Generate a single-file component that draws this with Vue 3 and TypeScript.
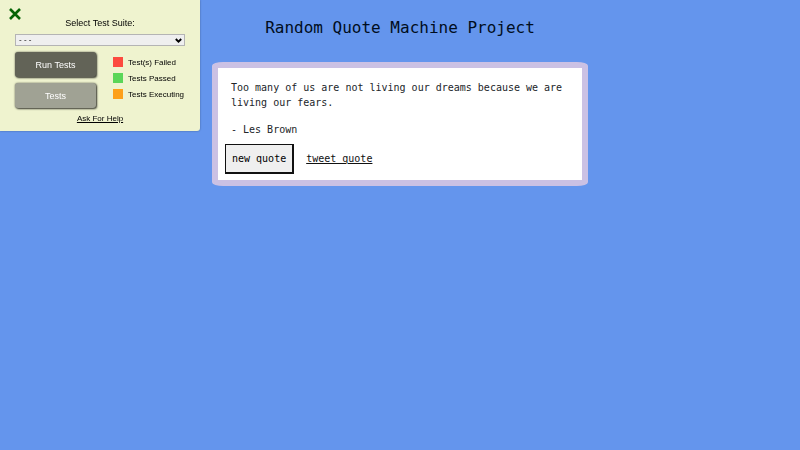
<script setup lang="ts">
import { computed, ref } from 'vue'

interface Quote {
  text: string
  author: string
}

const quotes: Quote[] = [
  {
    text: 'Too many of us are not living our dreams because we are living our fears.',
    author: 'Les Brown',
  },
]

const legend = [
  { label: 'Test(s) Failed', tone: 'failed' },
  { label: 'Tests Passed', tone: 'passed' },
  { label: 'Tests Executing', tone: 'executing' },
]

const index = ref(0)
const suite = ref('')
const panelOpen = ref(true)
const quote = computed(() => quotes[index.value])

function nextQuote(): void {
  index.value = (index.value + 1) % quotes.length
}
</script>

<template>
  <aside v-if="panelOpen" class="panel">
    <button class="close" type="button" aria-label="Close" @click="panelOpen = false">
      <svg width="12" height="12" viewBox="0 0 12 12" aria-hidden="true">
        <path d="M1 1L11 11M11 1L1 11" fill="none" stroke="#046404" stroke-width="2.6" />
      </svg>
    </button>
    <label class="suite-label" for="suite">Select Test Suite:</label>
    <div class="suite-field">
      <select id="suite" v-model="suite" class="suite">
        <option value="">- - -</option>
      </select>
      <svg class="chevron" width="7" height="5" viewBox="0 0 7 5" aria-hidden="true">
        <path d="M0.8 1L3.5 3.6L6.2 1" fill="none" stroke="#000" stroke-width="1.9" />
      </svg>
    </div>
    <div class="panel-body">
      <div class="actions">
        <button class="action run" type="button">Run Tests</button>
        <button class="action results" type="button">Tests</button>
      </div>
      <ul class="legend">
        <li v-for="item in legend" :key="item.tone">
          <span class="swatch" :class="item.tone"></span>{{ item.label }}
        </li>
      </ul>
    </div>
    <a class="help" href="#help">Ask For Help</a>
  </aside>

  <main class="page">
    <h1>Random Quote Machine Project</h1>
    <section class="quote-box">
      <p class="text">{{ quote.text }}</p>
      <p class="author">- {{ quote.author }}</p>
      <div class="controls">
        <button class="new-quote" type="button" @click="nextQuote">new quote</button>
        <a class="tweet" href="#tweet">tweet quote</a>
      </div>
    </section>
  </main>
</template>

<style>
body {
  background: #6495ed;
}
</style>

<style scoped>
.page {
  display: flex;
  flex-direction: column;
  align-items: center;
  padding: 18px 0;
  font-family: "DejaVu Sans Mono", monospace;
  font-size: 10px;
  color: #212529;
}

h1 {
  margin: 0 0 24px;
  font-size: 16px;
  line-height: 20px;
  font-weight: 400;
  color: #000d20;
}

.quote-box {
  box-sizing: border-box;
  width: 47%;
  padding: 6px 7px;
  border: 6px solid #cbc1e4;
  border-radius: 3%;
  background: #fff;
}

.text,
.author {
  margin: 0;
  padding: 6px;
  line-height: 15px;
}

.controls {
  display: flex;
  align-items: baseline;
  gap: 12px;
  padding-top: 1px;
}

.new-quote {
  padding: 6px;
  border: 1px solid #111;
  border-width: 1px 2px 2px 1px;
  background: #efefef;
  font: inherit;
  line-height: 15px;
  color: #000;
}

.tweet {
  color: #111;
}

.panel {
  position: fixed;
  top: 0;
  left: 0;
  box-sizing: border-box;
  width: 200px;
  padding: 8px 15px 6px;
  display: flex;
  flex-direction: column;
  border-radius: 0 0 3px 0;
  box-shadow: 0 0 2px rgba(0, 0, 0, 0.4);
  background: #eff3cf;
  font-family: "Liberation Sans", Arial, sans-serif;
  color: #000;
}

.close {
  position: absolute;
  top: 8px;
  left: 9px;
  padding: 0;
  border: 0;
  background: none;
  line-height: 0;
}

.suite-label {
  padding-top: 8px;
  font-size: 9px;
  line-height: 15px;
  text-align: center;
}

.suite-field {
  display: grid;
  margin-top: 3px;
}

.suite {
  grid-area: 1 / 1;
  appearance: none;
  width: 100%;
  height: 12px;
  padding: 0 3px;
  border: 1px solid #b4b4b4;
  border-radius: 0;
  background: #efefef;
  font-family: inherit;
  font-size: 8px;
  line-height: 10px;
  color: #000;
}

.chevron {
  grid-area: 1 / 1;
  place-self: center end;
  margin-right: 3px;
  pointer-events: none;
}

.panel-body {
  display: flex;
  gap: 17px;
  margin-top: 6px;
}

.actions {
  display: flex;
  flex-direction: column;
  gap: 6px;
  width: 81px;
}

.action {
  height: 25px;
  padding: 0;
  border: 0;
  border-radius: 3px;
  box-shadow: 1px 1px 2px rgba(0, 0, 0, 0.7), 0 0 2px rgba(0, 0, 0, 0.5);
  font-family: inherit;
  font-size: 9px;
  color: #fff;
}

.run {
  background: #626357;
}

.results {
  background: #a0a294;
}

.legend {
  margin: 0;
  padding: 2px 0;
  list-style: none;
  font-size: 8px;
  white-space: nowrap;
}

.legend li {
  display: flex;
  align-items: center;
  gap: 5px;
  height: 16px;
}

.swatch {
  width: 10px;
  height: 10px;
}

.failed {
  background: #fc4a3f;
}

.passed {
  background: #5bd658;
}

.executing {
  background: #fda019;
}

.help {
  align-self: center;
  margin-top: 5px;
  font-size: 8px;
  line-height: 12px;
  color: #000;
}
</style>
